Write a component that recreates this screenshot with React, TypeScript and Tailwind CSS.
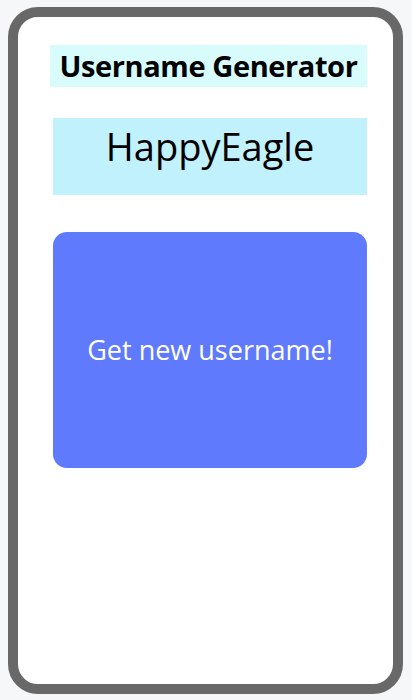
import React, { useState } from 'react';

const names = ['HappyEagle', 'BraveOtter', 'SwiftFalcon', 'CleverFox', 'SunnyPanda'];

export default function App() {
  const [name, setName] = useState('HappyEagle');

  const nextName = () => {
    const others = names.filter((n) => n !== name);
    setName(others[Math.floor(Math.random() * others.length)]);
  };

  return (
    <div className="h-[700px] w-[412px] bg-[#f6f7f9] pt-[7px] pl-[8px] font-['Open_Sans',sans-serif]">
      <div className="h-[687px] w-[395px] rounded-[30px] border-[10px] border-[#686868] bg-white pt-[28px]">
        <div className="ml-[32px] flex h-[42px] w-[317px] items-center justify-center bg-[#d8fcfc]">
          <h1 className="text-[29px] font-bold tracking-[-0.4px] text-black">Username Generator</h1>
        </div>

        <div className="mt-[31px] ml-[35px] h-[77px] w-[314px] bg-[#c1f1fd] text-center">
          <p className="pt-[2px] text-[38px] leading-[52px] text-black">{name}</p>
        </div>

        <button
          onClick={nextName}
          className="mt-[37px] ml-[35px] flex h-[236px] w-[314px] items-center justify-center rounded-[14px] bg-[#5f7afc] text-[27px] text-white"
        >
          Get new username!
        </button>
      </div>
    </div>
  );
}
